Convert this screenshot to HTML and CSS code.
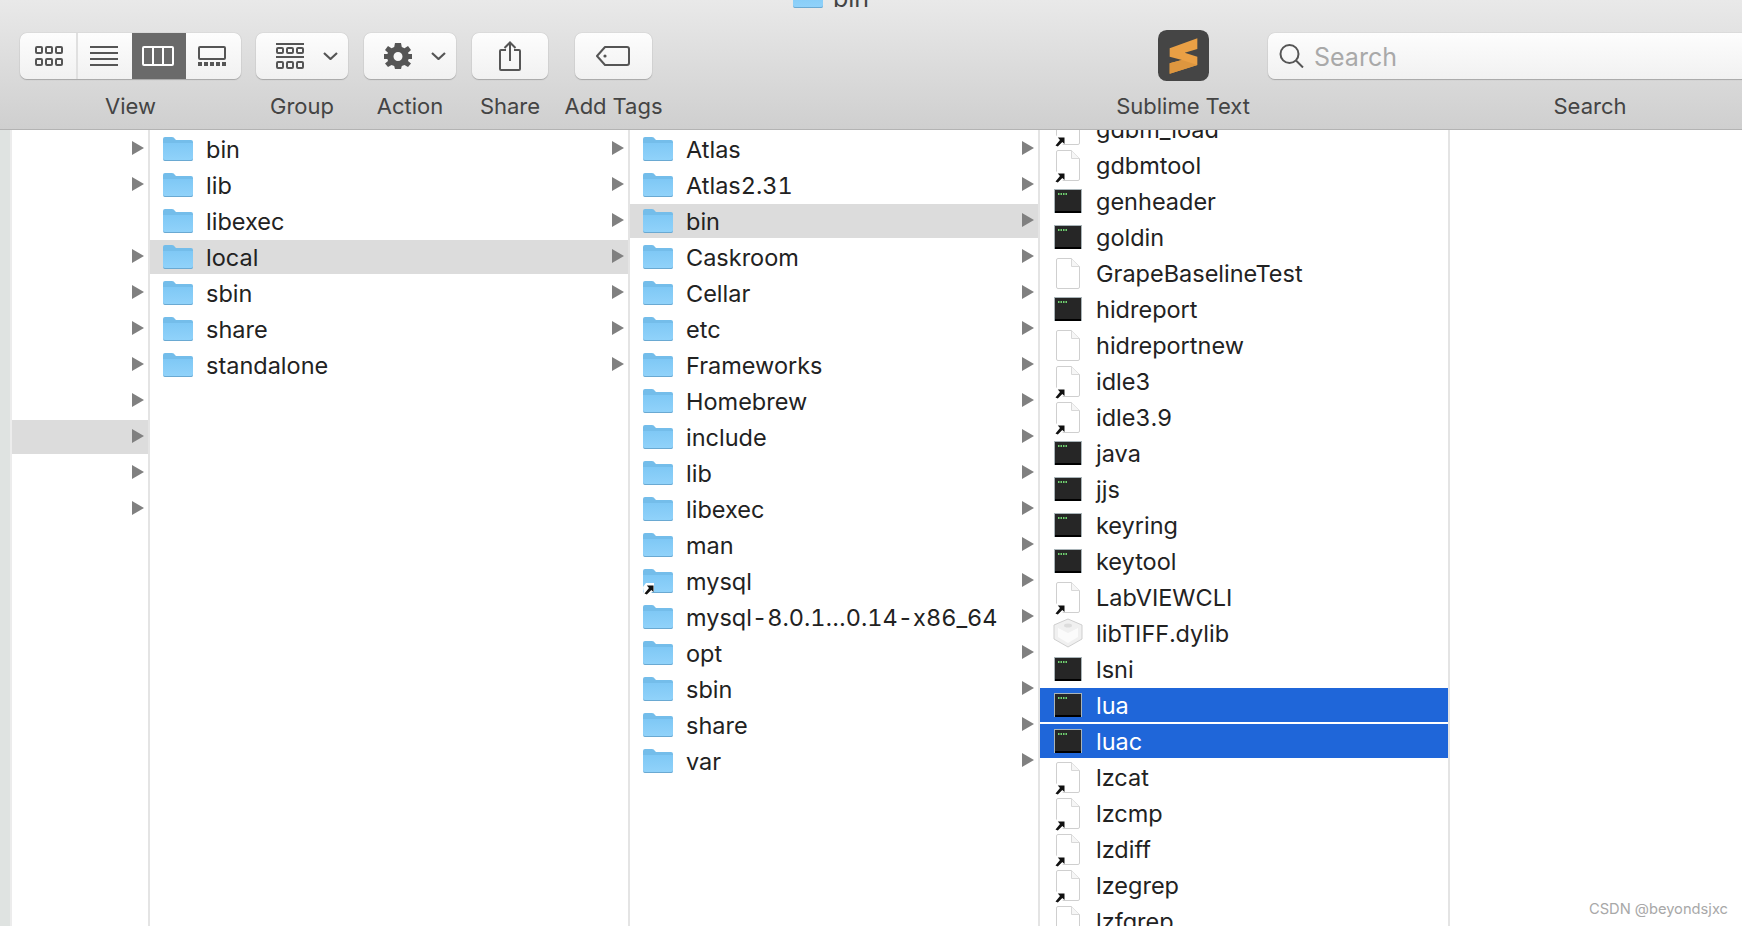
FILE: index.html
```html
<!DOCTYPE html>
<html lang="en">

<head>
  <meta charset="UTF-8">
  <title>bin</title>
  <link rel="stylesheet" href="styles.css">
</head>

<body>
  <svg class="defs" width="0" height="0">
    <defs>
      <linearGradient id="folder-fill" x1="0" y1="0" x2="0" y2="1">
        <stop offset="0" stop-color="#7fc8f5" />
        <stop offset="1" stop-color="#90d2fa" />
      </linearGradient>
      <symbol id="folder" viewBox="0 0 30 24">
        <path d="M1 23 Q0 23 0 21 V2 Q0 0 2 0 H9 Q11 0 12 2 L13 3 H28 Q30 3 30 5 V21 Q30 24 28 24 H2 Z" fill="#74bdea" />
        <path d="M0 6 H30 V21 Q30 23 28 23 H2 Q0 23 0 21 Z" fill="url(#folder-fill)" />
        <path d="M0 21.5 Q0 23 2 23 H28 Q30 23 30 21.500 V22 Q30 24 28 24 H2 Q0 24 0 22 Z" fill="#6aa9d2" />
      </symbol>
      <symbol id="doc" viewBox="0 0 24 31">
        <path d="M2 .5 H15.500 L23.500 8.500 V29 Q23.500 30.500 22 30.500 H2 Q.5 30.500 .5 29 V2 Q.5 .5 2 .5 Z" fill="#fff" stroke="#cfcfcf" />
        <path d="M15.500 .5 V8.500 H23.500" fill="#f6f6f6" stroke="#d8d8d8" />
      </symbol>
      <symbol id="term" viewBox="0 0 28 24">
        <rect x=".5" y=".5" width="27" height="23" fill="#262626" stroke="#a9b4b8" />
        <rect x="1" y="22" width="26" height="2" fill="#000" />
        <path d="M4 5 H5.500 M6.500 5 H8 M9 5 H10.500 M11.500 5 H13" stroke="#6fd06f" stroke-width="2" />
      </symbol>
      <symbol id="alias" viewBox="0 0 12 13">
        <path d="M0 5 L3 1 H11 V9 L8 11 L3 11 L1 13 Z" fill="#fff" />
        <path d="M1.500 11.500 L6 6 L3.800 3.500 H10.500 V10 L8.300 8 L3.800 12.500 Z" fill="#111" />
      </symbol>
      <symbol id="arrow" viewBox="0 0 12 14">
        <path d="M0 0 L12 7 L0 14 Z" fill="#808080" />
      </symbol>
      <symbol id="chevron" viewBox="0 0 15 8">
        <path d="M1 1 L7.500 7 L14 1" fill="none" stroke="#555" stroke-width="2.200" />
      </symbol>
    </defs>
  </svg>

  <header class="toolbar">
    <div class="title">
      <svg class="folder"><use href="#folder" /></svg>
      <span>bin</span>
    </div>
    <div class="tools">
      <div class="tool tool-view">
        <div class="btn segments">
          <div class="seg seg-first">
            <svg width="28" height="20" viewBox="0 0 28 20" fill="none" stroke="#555" stroke-width="2">
              <rect x="1" y="1" width="6" height="6" rx="1" /><rect x="11" y="1" width="6" height="6" rx="1" /><rect x="21" y="1" width="6" height="6" rx="1" />
              <rect x="1" y="13" width="6" height="6" rx="1" /><rect x="11" y="13" width="6" height="6" rx="1" /><rect x="21" y="13" width="6" height="6" rx="1" />
            </svg>
          </div>
          <div class="seg seg-list">
            <svg width="28" height="20" viewBox="0 0 28 20" stroke="#555" stroke-width="2">
              <path d="M0 1 H28 M0 7 H28 M0 13 H28 M0 19 H28" />
            </svg>
          </div>
          <div class="seg seg-active">
            <svg width="32" height="20" viewBox="0 0 32 20" fill="none" stroke="#fff" stroke-width="2">
              <rect x="1" y="1" width="30" height="18" rx="1" /><path d="M11 1 V19 M21 1 V19" />
            </svg>
          </div>
          <div class="seg seg-last">
            <svg width="28" height="20" viewBox="0 0 28 20">
              <rect x="1" y="1" width="26" height="12" rx="1" fill="none" stroke="#555" stroke-width="2" />
              <path d="M0 16 H4 V20 H0 Z M6 16 H10 V20 H6 Z M12 16 H16 V20 H12 Z M18 16 H22 V20 H18 Z M24 16 H28 V20 H24 Z" fill="#555" />
            </svg>
          </div>
        </div>
        <span class="label">View</span>
      </div>

      <div class="tool tool-group">
        <div class="btn btn-menu">
          <svg width="28" height="26" viewBox="0 0 28 26" fill="none" stroke="#555" stroke-width="2">
            <path d="M0 1 H28 M0 14 H28" />
            <rect x="1" y="5" width="6" height="5" rx="1" /><rect x="11" y="5" width="6" height="5" rx="1" /><rect x="21" y="5" width="6" height="5" rx="1" />
            <rect x="1" y="19" width="6" height="6" rx="1" /><rect x="11" y="19" width="6" height="6" rx="1" /><rect x="21" y="19" width="6" height="6" rx="1" />
          </svg>
          <svg class="chevron"><use href="#chevron" /></svg>
        </div>
        <span class="label">Group</span>
      </div>

      <div class="tool tool-action">
        <div class="btn btn-menu">
          <svg width="28" height="26" viewBox="0 0 28 26">
            <path fill="#555" fill-rule="evenodd" d="M11 0 H17 L17.800 4 L20.500 5.200 L24 3 L27 7 L24 9.800 L24.600 11 L28 11 V16 L24.600 16 L24 18 L27 20.500 L24 24 L20.500 22 L17.800 23 L17 26 H11 L10.200 23 L7.500 22 L4 24 L1 20.500 L4 18 L3.400 16 L0 16 V11 L3.400 11 L4 9.800 L1 7 L4 3 L7.500 5.200 L10.200 4 Z M14 9 A4.500 4.500 0 1 0 14 18 A4.500 4.500 0 1 0 14 9 Z" />
          </svg>
          <svg class="chevron"><use href="#chevron" /></svg>
        </div>
        <span class="label">Action</span>
      </div>

      <div class="tool tool-share">
        <div class="btn btn-icon">
          <svg width="22" height="30" viewBox="0 0 22 30" fill="none" stroke="#555" stroke-width="2">
            <path d="M7 9 H2 Q1 9 1 10 V28 Q1 29 2 29 H20 Q21 29 21 28 V10 Q21 9 20 9 H15" />
            <path d="M11 20 V1.500 M5.500 7 L11 1.500 L16.500 7" />
          </svg>
        </div>
        <span class="label">Share</span>
      </div>

      <div class="tool tool-tags">
        <div class="btn btn-icon btn-tag">
          <svg width="34" height="20" viewBox="0 0 34 20">
            <path d="M9 1 H31 Q33 1 33 3 V17 Q33 19 31 19 H9 L1 10 Z" fill="none" stroke="#555" stroke-width="2" stroke-linejoin="round" />
            <circle cx="9" cy="10" r="1.600" fill="#555" />
          </svg>
        </div>
        <span class="label">Add Tags</span>
      </div>

      <div class="tool tool-app">
        <svg class="app-icon" width="51" height="51" viewBox="0 0 153 153">
          <rect width="153" height="153" rx="26" fill="#454545" />
          <path d="M35 55 L118 25 V57 L80 68 L118 80 V105 L35 131 V100 L72 90 L35 80 Z" fill="#eaa045" />
          <path d="M35 100 L72 90 L118 105 L35 131 Z" fill="#dd963f" />
        </svg>
        <span class="label">Sublime Text</span>
      </div>

      <div class="tool tool-search">
        <div class="btn search-field">
          <svg width="25" height="24" viewBox="0 0 25 24" fill="none" stroke="#555" stroke-width="2">
            <circle cx="10.500" cy="10" r="9" /><path d="M17 16.500 L24 23.500" />
          </svg>
          <span class="placeholder">Search</span>
        </div>
        <span class="label">Search</span>
      </div>
    </div>
  </header>

  <main class="browser">
    <div class="strip"></div>

    <div class="col col-parent">
      <div class="row"><svg class="arrow"><use href="#arrow" /></svg></div>
      <div class="row"><svg class="arrow"><use href="#arrow" /></svg></div>
      <div class="row"></div>
      <div class="row"><svg class="arrow"><use href="#arrow" /></svg></div>
      <div class="row"><svg class="arrow"><use href="#arrow" /></svg></div>
      <div class="row"><svg class="arrow"><use href="#arrow" /></svg></div>
      <div class="row"><svg class="arrow"><use href="#arrow" /></svg></div>
      <div class="row"><svg class="arrow"><use href="#arrow" /></svg></div>
      <div class="row current"><svg class="arrow"><use href="#arrow" /></svg></div>
      <div class="row"><svg class="arrow"><use href="#arrow" /></svg></div>
      <div class="row"><svg class="arrow"><use href="#arrow" /></svg></div>
    </div>

    <div class="col col-usr">
      <div class="row"><svg class="folder"><use href="#folder" /></svg><span>bin</span><svg class="arrow"><use href="#arrow" /></svg></div>
      <div class="row"><svg class="folder"><use href="#folder" /></svg><span>lib</span><svg class="arrow"><use href="#arrow" /></svg></div>
      <div class="row"><svg class="folder"><use href="#folder" /></svg><span>libexec</span><svg class="arrow"><use href="#arrow" /></svg></div>
      <div class="row current"><svg class="folder"><use href="#folder" /></svg><span>local</span><svg class="arrow"><use href="#arrow" /></svg></div>
      <div class="row"><svg class="folder"><use href="#folder" /></svg><span>sbin</span><svg class="arrow"><use href="#arrow" /></svg></div>
      <div class="row"><svg class="folder"><use href="#folder" /></svg><span>share</span><svg class="arrow"><use href="#arrow" /></svg></div>
      <div class="row"><svg class="folder"><use href="#folder" /></svg><span>standalone</span><svg class="arrow"><use href="#arrow" /></svg></div>
    </div>

    <div class="col col-local">
      <div class="row"><svg class="folder"><use href="#folder" /></svg><span>Atlas</span><svg class="arrow"><use href="#arrow" /></svg></div>
      <div class="row"><svg class="folder"><use href="#folder" /></svg><span>Atlas2.31</span><svg class="arrow"><use href="#arrow" /></svg></div>
      <div class="row current"><svg class="folder"><use href="#folder" /></svg><span>bin</span><svg class="arrow"><use href="#arrow" /></svg></div>
      <div class="row"><svg class="folder"><use href="#folder" /></svg><span>Caskroom</span><svg class="arrow"><use href="#arrow" /></svg></div>
      <div class="row"><svg class="folder"><use href="#folder" /></svg><span>Cellar</span><svg class="arrow"><use href="#arrow" /></svg></div>
      <div class="row"><svg class="folder"><use href="#folder" /></svg><span>etc</span><svg class="arrow"><use href="#arrow" /></svg></div>
      <div class="row"><svg class="folder"><use href="#folder" /></svg><span>Frameworks</span><svg class="arrow"><use href="#arrow" /></svg></div>
      <div class="row"><svg class="folder"><use href="#folder" /></svg><span>Homebrew</span><svg class="arrow"><use href="#arrow" /></svg></div>
      <div class="row"><svg class="folder"><use href="#folder" /></svg><span>include</span><svg class="arrow"><use href="#arrow" /></svg></div>
      <div class="row"><svg class="folder"><use href="#folder" /></svg><span>lib</span><svg class="arrow"><use href="#arrow" /></svg></div>
      <div class="row"><svg class="folder"><use href="#folder" /></svg><span>libexec</span><svg class="arrow"><use href="#arrow" /></svg></div>
      <div class="row"><svg class="folder"><use href="#folder" /></svg><span>man</span><svg class="arrow"><use href="#arrow" /></svg></div>
      <div class="row"><div class="icon-wrap"><svg class="folder"><use href="#folder" /></svg><svg class="badge"><use href="#alias" /></svg></div><span>mysql</span><svg class="arrow"><use href="#arrow" /></svg></div>
      <div class="row"><svg class="folder"><use href="#folder" /></svg><span>mysql-8.0.1…0.14-x86_64</span><svg class="arrow"><use href="#arrow" /></svg></div>
      <div class="row"><svg class="folder"><use href="#folder" /></svg><span>opt</span><svg class="arrow"><use href="#arrow" /></svg></div>
      <div class="row"><svg class="folder"><use href="#folder" /></svg><span>sbin</span><svg class="arrow"><use href="#arrow" /></svg></div>
      <div class="row"><svg class="folder"><use href="#folder" /></svg><span>share</span><svg class="arrow"><use href="#arrow" /></svg></div>
      <div class="row"><svg class="folder"><use href="#folder" /></svg><span>var</span><svg class="arrow"><use href="#arrow" /></svg></div>
    </div>

    <div class="col col-files">
      <div class="row"><div class="icon-wrap"><svg class="doc"><use href="#doc" /></svg><svg class="badge"><use href="#alias" /></svg></div><span>gdbm_load</span></div>
      <div class="row"><div class="icon-wrap"><svg class="doc"><use href="#doc" /></svg><svg class="badge"><use href="#alias" /></svg></div><span>gdbmtool</span></div>
      <div class="row"><div class="icon-wrap"><svg class="term"><use href="#term" /></svg></div><span>genheader</span></div>
      <div class="row"><div class="icon-wrap"><svg class="term"><use href="#term" /></svg></div><span>goldin</span></div>
      <div class="row"><div class="icon-wrap"><svg class="doc"><use href="#doc" /></svg></div><span>GrapeBaselineTest</span></div>
      <div class="row"><div class="icon-wrap"><svg class="term"><use href="#term" /></svg></div><span>hidreport</span></div>
      <div class="row"><div class="icon-wrap"><svg class="doc"><use href="#doc" /></svg></div><span>hidreportnew</span></div>
      <div class="row"><div class="icon-wrap"><svg class="doc"><use href="#doc" /></svg><svg class="badge"><use href="#alias" /></svg></div><span>idle3</span></div>
      <div class="row"><div class="icon-wrap"><svg class="doc"><use href="#doc" /></svg><svg class="badge"><use href="#alias" /></svg></div><span>idle3.9</span></div>
      <div class="row"><div class="icon-wrap"><svg class="term"><use href="#term" /></svg></div><span>java</span></div>
      <div class="row"><div class="icon-wrap"><svg class="term"><use href="#term" /></svg></div><span>jjs</span></div>
      <div class="row"><div class="icon-wrap"><svg class="term"><use href="#term" /></svg></div><span>keyring</span></div>
      <div class="row"><div class="icon-wrap"><svg class="term"><use href="#term" /></svg></div><span>keytool</span></div>
      <div class="row"><div class="icon-wrap"><svg class="doc"><use href="#doc" /></svg><svg class="badge"><use href="#alias" /></svg></div><span>LabVIEWCLI</span></div>
      <div class="row">
        <div class="icon-wrap">
          <svg class="dylib" viewBox="0 0 30 30">
            <path d="M15 1 L29 7 V21 L15 29 L1 21 V7 Z" fill="#f0f0f0" stroke="#cfcfcf" />
            <path d="M5 10 L15 15 L25 10 V19 L15 25 L5 19 Z" fill="#fbfbfb" />
            <ellipse cx="15" cy="7.500" rx="4" ry="2" fill="#dcdcdc" />
          </svg>
        </div>
        <span>libTIFF.dylib</span>
      </div>
      <div class="row"><div class="icon-wrap"><svg class="term"><use href="#term" /></svg></div><span>lsni</span></div>
      <div class="row selected"><div class="icon-wrap"><svg class="term"><use href="#term" /></svg></div><span>lua</span></div>
      <div class="row selected"><div class="icon-wrap"><svg class="term"><use href="#term" /></svg></div><span>luac</span></div>
      <div class="row"><div class="icon-wrap"><svg class="doc"><use href="#doc" /></svg><svg class="badge"><use href="#alias" /></svg></div><span>lzcat</span></div>
      <div class="row"><div class="icon-wrap"><svg class="doc"><use href="#doc" /></svg><svg class="badge"><use href="#alias" /></svg></div><span>lzcmp</span></div>
      <div class="row"><div class="icon-wrap"><svg class="doc"><use href="#doc" /></svg><svg class="badge"><use href="#alias" /></svg></div><span>lzdiff</span></div>
      <div class="row"><div class="icon-wrap"><svg class="doc"><use href="#doc" /></svg><svg class="badge"><use href="#alias" /></svg></div><span>lzegrep</span></div>
      <div class="row"><div class="icon-wrap"><svg class="doc"><use href="#doc" /></svg><svg class="badge"><use href="#alias" /></svg></div><span>lzfgrep</span></div>
    </div>

    <div class="col col-empty"></div>
  </main>

  <div class="watermark">CSDN @beyondsjxc</div>
</body>

</html>
```

FILE: styles.css
```css
* {
  margin: 0;
  padding: 0;
  box-sizing: border-box;
}

html,
body {
  height: 100%;
}

body {
  position: relative;
  overflow: hidden;
  background: #fff;
  font-family: Inter, "Noto Sans", sans-serif;
  font-variant-numeric: tabular-nums;
  color: #222;
}

.defs {
  display: block;
  height: 0;
}

svg {
  display: block;
  flex-shrink: 0;
}

/* toolbar */

.toolbar {
  height: 130px;
  background: linear-gradient(#e9e9e9, #cfcfcf);
  border-bottom: 1px solid #b3b3b3;
}

.title {
  height: 8px;
  padding-left: 793px;
  display: flex;
  align-items: flex-end;
  gap: 10px;
  font-size: 25px;
  line-height: 26px;
  color: #444;
}

.title span {
  position: relative;
  top: 3px;
}

.tools {
  display: flex;
  padding: 25px 0 0 20px;
}

.tool {
  display: flex;
  flex-direction: column;
  align-items: center;
  flex-shrink: 0;
}

.label {
  margin-top: 14px;
  font-size: 22px;
  line-height: 26px;
  color: #444;
  white-space: nowrap;
}

.btn {
  height: 46px;
  width: 100%;
  display: flex;
  align-items: center;
  background: linear-gradient(#fdfdfd, #f1f1f1);
  border-radius: 7px;
  box-shadow: 0 0 1px #9c9c9c, 0 1px 1px #a8a8a8;
}

.tool-view {
  width: 221px;
}

.tool-group {
  width: 92px;
  margin-left: 15px;
}

.tool-action {
  width: 92px;
  margin-left: 16px;
}

.tool-share {
  width: 76px;
  margin-left: 16px;
}

.tool-tags {
  width: 77px;
  margin-left: 27px;
}

.tool-app {
  width: 130px;
  margin-left: 466px;
}

.tool-search {
  width: 644px;
  margin-left: 20px;
}

.segments {
  overflow: hidden;
}

.seg {
  height: 100%;
  display: flex;
  align-items: center;
  justify-content: center;
}

.seg-first {
  width: 58px;
  padding-left: 2px;
  border-right: 2px solid #e0e0e0;
}

.seg-list {
  width: 54px;
  padding-right: 2px;
}

.seg-active {
  width: 54px;
  padding-right: 2px;
  background: #6a6a6a;
}

.seg-last {
  width: 55px;
  padding-right: 4px;
}

.btn-menu {
  padding-left: 20px;
  gap: 19px;
}

.btn-icon {
  justify-content: center;
}

.btn-tag {
  padding-right: 2px;
}

.chevron {
  width: 15px;
  height: 8px;
}

.app-icon {
  margin-top: -3px;
  margin-bottom: -2px;
}

.search-field {
  padding-left: 11px;
  gap: 10px;
  border-radius: 7px 0 0 7px;
}

.placeholder {
  padding-top: 2px;
  font-size: 25px;
  color: #a9a9a9;
}

/* browser columns */

.browser {
  display: flex;
  height: 796px;
  overflow: hidden;
}

.strip {
  width: 12px;
  background: #dfe3e1;
  border-right: 2px solid #ececec;
  flex-shrink: 0;
}

.col {
  flex-shrink: 0;
  height: 100%;
  overflow: hidden;
  padding-top: 2px;
  border-right: 2px solid #e4e4e4;
}

.col-parent {
  width: 138px;
}

.col-usr {
  width: 480px;
}

.col-local {
  width: 410px;
}

.col-files {
  width: 410px;
  padding-top: 0;
}

.col-files .row:first-child {
  margin-top: -18px;
}

.col-empty {
  flex: 1;
  border-right: none;
}

.row {
  height: 34px;
  margin-bottom: 2px;
  display: flex;
  align-items: center;
  padding: 0 4px 0 13px;
  font-size: 23.5px;
  white-space: nowrap;
}

.row .folder {
  margin-right: 13px;
}

.col-files .row {
  padding-left: 14px;
}

.icon-wrap {
  position: relative;
  flex-shrink: 0;
  width: 28px;
  height: 31px;
  display: flex;
  align-items: center;
  justify-content: center;
}

.col-local .icon-wrap {
  width: 30px;
  height: 24px;
  margin-right: 13px;
}

.col-local .icon-wrap .folder {
  margin-right: 0;
}

.col-files .icon-wrap {
  margin-right: 14px;
}

.folder {
  width: 30px;
  height: 24px;
}

.doc {
  width: 24px;
  height: 31px;
}

.term {
  width: 28px;
  height: 24px;
}

.dylib {
  width: 30px;
  height: 30px;
}

.badge {
  position: absolute;
  left: 0;
  bottom: -2px;
  width: 12px;
  height: 13px;
}

.arrow {
  width: 12px;
  height: 14px;
  margin-left: auto;
  margin-bottom: 2px;
}

.current {
  background: #dcdcdc;
}

.selected {
  background: #1f66d9;
  color: #fff;
}

.watermark {
  position: absolute;
  right: 14px;
  bottom: 8px;
  font-size: 14.7px;
  color: #a8a8a8;
}
```
